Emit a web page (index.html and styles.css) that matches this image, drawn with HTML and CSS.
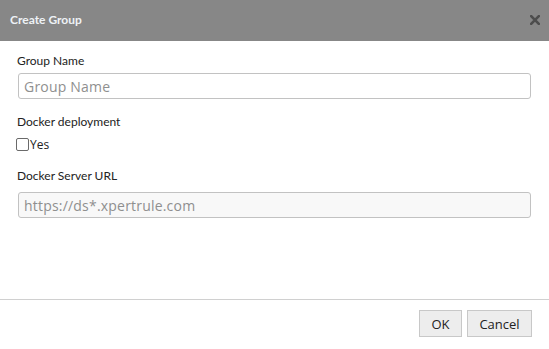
FILE: index.html
```html
<!DOCTYPE html>
<html>
<head>
<meta charset="utf-8">
<link rel="stylesheet" href="styles.css">
</head>
<body>
<div class="dialog">
  <div class="header">
    <span class="title">Create Group</span>
    <svg class="close" width="10" height="10" viewBox="0 0 10 10"><path d="M1.2 1.2 L8.8 8.8 M8.8 1.2 L1.2 8.8" stroke="#4d4d4d" stroke-width="2.6" stroke-linecap="square"/></svg>
  </div>
  <div class="content">
    <label class="label">Group Name</label>
    <input class="field" type="text" placeholder="Group Name">
    <label class="label label-gap">Docker deployment</label>
    <div class="check-row"><span class="checkbox"></span><span class="check-text">Yes</span></div>
    <label class="label label-gap2">Docker Server URL</label>
    <input class="field field-disabled" type="text" placeholder="https://ds*.xpertrule.com">
  </div>
  <div class="footer">
    <button class="btn btn-ok">OK</button>
    <button class="btn btn-cancel">Cancel</button>
  </div>
</div>
</body>
</html>
```

FILE: styles.css
```css
html, body {
  margin: 0;
  padding: 0;
  background: #fff;
}
.dialog {
  width: 549px;
  height: 349px;
  display: flex;
  flex-direction: column;
  font-family: Lato, "Open Sans", sans-serif;
}
.header {
  height: 41px;
  flex: none;
  background: #878787;
  display: flex;
  align-items: center;
  justify-content: space-between;
  padding: 0 9px 0 10px;
  box-sizing: border-box;
}
.title {
  color: #eef2f6;
  font-weight: bold;
  font-size: 12px;
  margin-top: -2px;
}
.close {
  display: block;
  margin-top: -2px;
}
.content {
  flex: 1;
  display: flex;
  flex-direction: column;
  align-items: flex-start;
  padding: 12px 17px 0 17px;
}
.label {
  font-size: 12px;
  color: #222;
  line-height: 15px;
  display: block;
}
.label-gap { margin-top: 15px; }
.label-gap2 { margin-top: 15px; }
.field {
  margin: 5px 0 0 1px;
  width: 513px;
  height: 26px;
  box-sizing: border-box;
  border: 1px solid #c2c2c2;
  border-radius: 3px;
  padding: 1px 5px 0 5px;
  font-family: "Open Sans", sans-serif;
  font-size: 14px;
  letter-spacing: 0.2px;
  outline: none;
  background: #fff;
}
.field::placeholder { color: #8f8f8f; }
.field-disabled { background: #f8f8f8; margin-top: 9px; }
.check-row {
  display: flex;
  align-items: center;
  margin-top: 7px;
}
.checkbox {
  width: 11px;
  height: 11px;
  border: 1px solid #6a6a6a;
  border-radius: 2px;
  margin-left: -1px;
}
.check-text {
  font-size: 12px;
  color: #222;
  margin-left: 1px;
  font-family: "Open Sans", sans-serif;
}
.footer {
  height: 50px;
  flex: none;
  box-sizing: border-box;
  border-top: 1px solid #d0d0d0;
  display: flex;
  justify-content: flex-end;
  align-items: flex-start;
  gap: 5px;
  padding: 10px 17px 0 0;
}
.btn {
  height: 27px;
  border: 1px solid #c8c8c8;
  background: #ededed;
  color: #222;
  font-family: "Open Sans", sans-serif;
  font-size: 13px;
  padding: 0;
  border-radius: 0;
}
.btn-ok { width: 43px; }
.btn-cancel { width: 65px; }
```
